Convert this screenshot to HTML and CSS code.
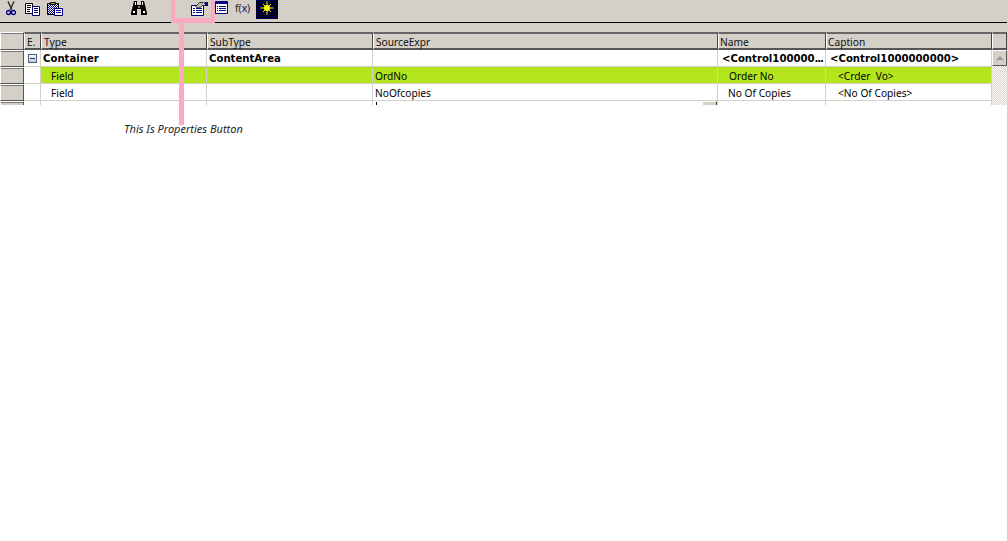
FILE: index.html
```html
<!DOCTYPE html>
<html>
<head>
<meta charset="utf-8">
<title>Page Designer</title>
<link rel="stylesheet" href="styles.css">
</head>
<body>
<div class="designer">
  <div class="toolbar">
    <svg class="icon cut" width="10" height="15" viewBox="0 0 10 15"><path d="M2 0.500L5.500 8M8 0.500L4.500 8" stroke="#222" stroke-width="1.300" fill="none"/><circle cx="2.500" cy="11.500" r="2" fill="none" stroke="#000080" stroke-width="1.300"/><circle cx="7.500" cy="11.500" r="2" fill="none" stroke="#000080" stroke-width="1.300"/><path d="M4.500 8L3.500 9.500M5.500 8l1 1.500" stroke="#000080"/></svg>
    <svg class="icon copy" width="15" height="13" viewBox="0 0 15 13"><path d="M.5.500h7v10h-7z" fill="#fff" stroke="#000"/><path d="M2 2.500h4M2 4.500h4M2 6.500h3M2 8.500h3" stroke="#000"/><path d="M7.500 3.500h7v9h-7z" fill="#fff" stroke="#000080"/><path d="M9 5.500h4M9 7.500h4M9 9.500h4" stroke="#000080"/></svg>
    <svg class="icon paste" width="16" height="14" viewBox="0 0 16 14"><defs><pattern id="dith" width="2" height="2" patternUnits="userSpaceOnUse"><rect width="2" height="2" fill="#fff"/><rect width="1" height="1" fill="#000080"/><rect x="1" y="1" width="1" height="1" fill="#000080"/></pattern></defs><path d="M.5 1.500h11v11H.5z" fill="url(#dith)" stroke="#000"/><path d="M3.500.5h5v2h-5z" fill="#c8a800" stroke="#000"/><path d="M7.500 6.500h8v7h-8z" fill="#fff" stroke="#000080"/><path d="M9 8.500h5M9 10.500h5" stroke="#000080"/></svg>
    <svg class="icon binoculars" width="16" height="14" viewBox="0 0 16 14"><path d="M3 0h3v4h4V0h3l3 12v2h-6V8H6v6H0v-2z" fill="#000"/><path d="M2 10h2v2H2zM12 10h2v2h-2zM4 1h1v3H4zM11 1h1v3h-1z" fill="#fff"/><path d="M7 5h2v2H7z" fill="#777"/></svg>
    <svg class="icon props" width="17" height="15" viewBox="0 0 17 15"><path d="M.5 4.500h12v10H.5z" fill="#fff" stroke="#000080"/><path d="M2 7.500h2M5 7.500h6M2 9.500h2M5 9.500h6M2 11.500h2M5 11.500h6" stroke="#000080"/><path d="M4.500 5.500l4-4h4l2 1v2h-3l-2 2-2 .5z" fill="#b8b8b8" stroke="#333"/><path d="M14 1h3v4h-3z" fill="#000080"/></svg>
    <svg class="icon list" width="14" height="14" viewBox="0 0 14 14"><path d="M.5.500h12v12H.5z" fill="#fff" stroke="#000080"/><path d="M1 1h11v2H1z" fill="#000080"/><path d="M2 5.500h1M4 5.500h7M2 7.500h1M4 7.500h7M2 9.500h1M4 9.500h7" stroke="#000080"/></svg>
    <span class="fx">f(<em>x</em>)</span>
    <span class="sun"><svg width="22" height="19" viewBox="0 0 22 19"><circle cx="11" cy="8" r="3" fill="#ff0"/><path d="M11 1.500v13M4.500 8h13M7 4l8 8M15 4l-8 8" stroke="#ff0"/></svg></span>
  </div>
  <div class="gap"></div>
  <div class="grid">
    <div class="sel"></div>
    <div class="hd e">E.</div>
    <div class="hd">Type</div>
    <div class="hd">SubType</div>
    <div class="hd">SourceExpr</div>
    <div class="hd tight">Name</div>
    <div class="hd tight">Caption</div>
    <div class="hd corner"></div>

    <div class="sel"></div>
    <div class="cell fold"><span class="minus"></span></div>
    <div class="cell strong">Container</div>
    <div class="cell strong">ContentArea</div>
    <div class="cell"></div>
    <div class="cell strong wide">&lt;Control100000<span class="dots">...</span></div>
    <div class="cell strong wide">&lt;Control1000000000&gt;</div>
    <div class="scroll"><div class="arrow"></div><div class="track"></div></div>

    <div class="sel"></div>
    <div class="cell"></div>
    <div class="cell on in">Field</div>
    <div class="cell on"></div>
    <div class="cell on">OrdNo</div>
    <div class="cell on in name">Order No</div>
    <div class="cell on in cap">&lt;Crder &nbsp;Vo&gt;</div>

    <div class="sel"></div>
    <div class="cell"></div>
    <div class="cell in">Field</div>
    <div class="cell"></div>
    <div class="cell">NoOfcopies</div>
    <div class="cell in name2">No Of Copies</div>
    <div class="cell in cap">&lt;No Of Copies&gt;</div>

    <div class="sel"></div>
    <div class="cell"></div>
    <div class="cell in">Field</div>
    <div class="cell"></div>
    <div class="cell edit"><span class="caret"></span><span class="drop"></span></div>
    <div class="cell"></div>
    <div class="cell"></div>
  </div>
</div>
<div class="callout-box"></div>
<div class="callout-line"></div>
<div class="callout-text">This Is Properties Button</div>
</body>
</html>
```
FILE: styles.css
```css
html, body { margin: 0; padding: 0; background: #fff; }
body {
  width: 1007px;
  height: 541px;
  overflow: hidden;
  position: relative;
  font-family: "Noto Sans", "DejaVu Sans", sans-serif;
  font-size: 10.200px;
  color: #000;
}
.designer { height: 105px; overflow: hidden; background: #d4d0c8; }
.toolbar {
  height: 22px;
  border-bottom: 1px solid #000;
  display: flex;
  align-items: flex-start;
  background: #d4d0c8;
}
.icon { flex: none; }
.cut { margin: 1px 0 0 6px; }
.copy { margin: 3px 0 0 9px; }
.paste { margin: 2px 0 0 7px; }
.binoculars { margin: 1px 0 0 68px; }
.props { margin: 1px 0 0 44px; }
.list { margin: 1px 0 0 7px; }
.fx { flex: none; width: 18px; margin-left: 6px; font-size: 10.300px; line-height: 17px; color: #222; white-space: nowrap; }
.fx em { font-style: normal; color: #000080; }
.sun {
  flex: none;
  margin-left: 3px;
  width: 22px;
  height: 19px;
  background: repeating-conic-gradient(#000 0 25%, #000050 0 50%) 0 0 / 2px 2px;
  display: block;
}
.sun svg { display: block; }
.gap { height: 9px; }
.grid {
  display: grid;
  grid-template-columns: 24px 17px 166px 166px 345px 108px 166px 15px;
  grid-auto-rows: 17px;
  grid-template-rows: 18px;
  background: #fff;
}
.sel {
  background: #d4d0c8;
  border: 1px solid #fff;
  border-right-color: #555;
  border-bottom-color: #555;
  box-shadow: inset 0 1px 0 #777;
  box-sizing: border-box;
}
.hd {
  background: #d4d0c8;
  box-sizing: border-box;
  border-top: 2px solid #666;
  border-bottom: 2px solid #555;
  border-right: 1px solid #444;
  border-left: 1px solid #fff;
  padding-left: 2px;
  line-height: 16px;
  color: #111;
  white-space: nowrap;
}
.hd.tight { padding-left: 1px; }
.corner { padding: 0; }
.cell {
  box-sizing: border-box;
  border-right: 1px solid #d4d0c8;
  border-bottom: 1px solid #d4d0c8;
  padding-left: 2px;
  line-height: 18px;
  white-space: nowrap;
  overflow: hidden;
  position: relative;
  background: #fff;
}
.strong { font-family: "DejaVu Sans", sans-serif; font-weight: 700; font-size: 10.150px; }
.wide { padding-left: 4px; }
.dots { letter-spacing: -1.200px; }
.on { background: #b4e61e; }
.in { padding-left: 10px; }
.name { padding-left: 11px; }
.name2 { padding-left: 10px; }
.cap { padding-left: 12px; }
.fold { padding: 0; }
.minus {
  display: block;
  width: 9px;
  height: 9px;
  margin: 4px 0 0 4px;
  box-sizing: border-box;
  border: 1px solid #4c5a7e;
  background: linear-gradient(#2c3a6e, #2c3a6e) center / 5px 1px no-repeat, linear-gradient(#f4f6fa, #c0c8dc);
}
.scroll { grid-row: 2 / span 4; grid-column: 8; overflow: hidden; }
.arrow {
  height: 16px;
  box-sizing: border-box;
  background: #d4d0c8;
  border: 1px solid #fff;
  border-right-color: #555;
  border-bottom-color: #555;
  position: relative;
}
.arrow::after {
  content: "";
  position: absolute;
  left: 3px;
  top: 5px;
  border: 4px solid transparent;
  border-top: 0;
  border-bottom: 4px solid #999;
}
.track {
  height: 60px;
  background: repeating-conic-gradient(#d4d0c8 0 25%, #fff 0 50%) 0 0 / 2px 2px;
}
.edit { overflow: visible; }
.caret { position: absolute; left: 3px; top: 1px; width: 1px; height: 14px; background: #000; }
.drop {
  position: absolute;
  right: 0;
  top: 0;
  width: 15px;
  height: 15px;
  background: #d4d0c8;
  border: 1px solid #fff;
  border-right: 1px solid #444;
  box-sizing: border-box;
}
.callout-box {
  position: absolute;
  left: 171px;
  top: -5px;
  width: 44px;
  height: 28px;
  box-sizing: border-box;
  border: 4px solid #fcaac4;
  border-top: 0;
  border-bottom-width: 5px;
}
.callout-line { position: absolute; left: 179px; top: 23px; width: 5px; height: 102px; background: #fcaac4; }
.callout-text {
  position: absolute;
  left: 124px;
  top: 122px;
  font-style: italic;
  font-size: 11px;
  line-height: 14px;
  color: #222;
  white-space: nowrap;
}
```
